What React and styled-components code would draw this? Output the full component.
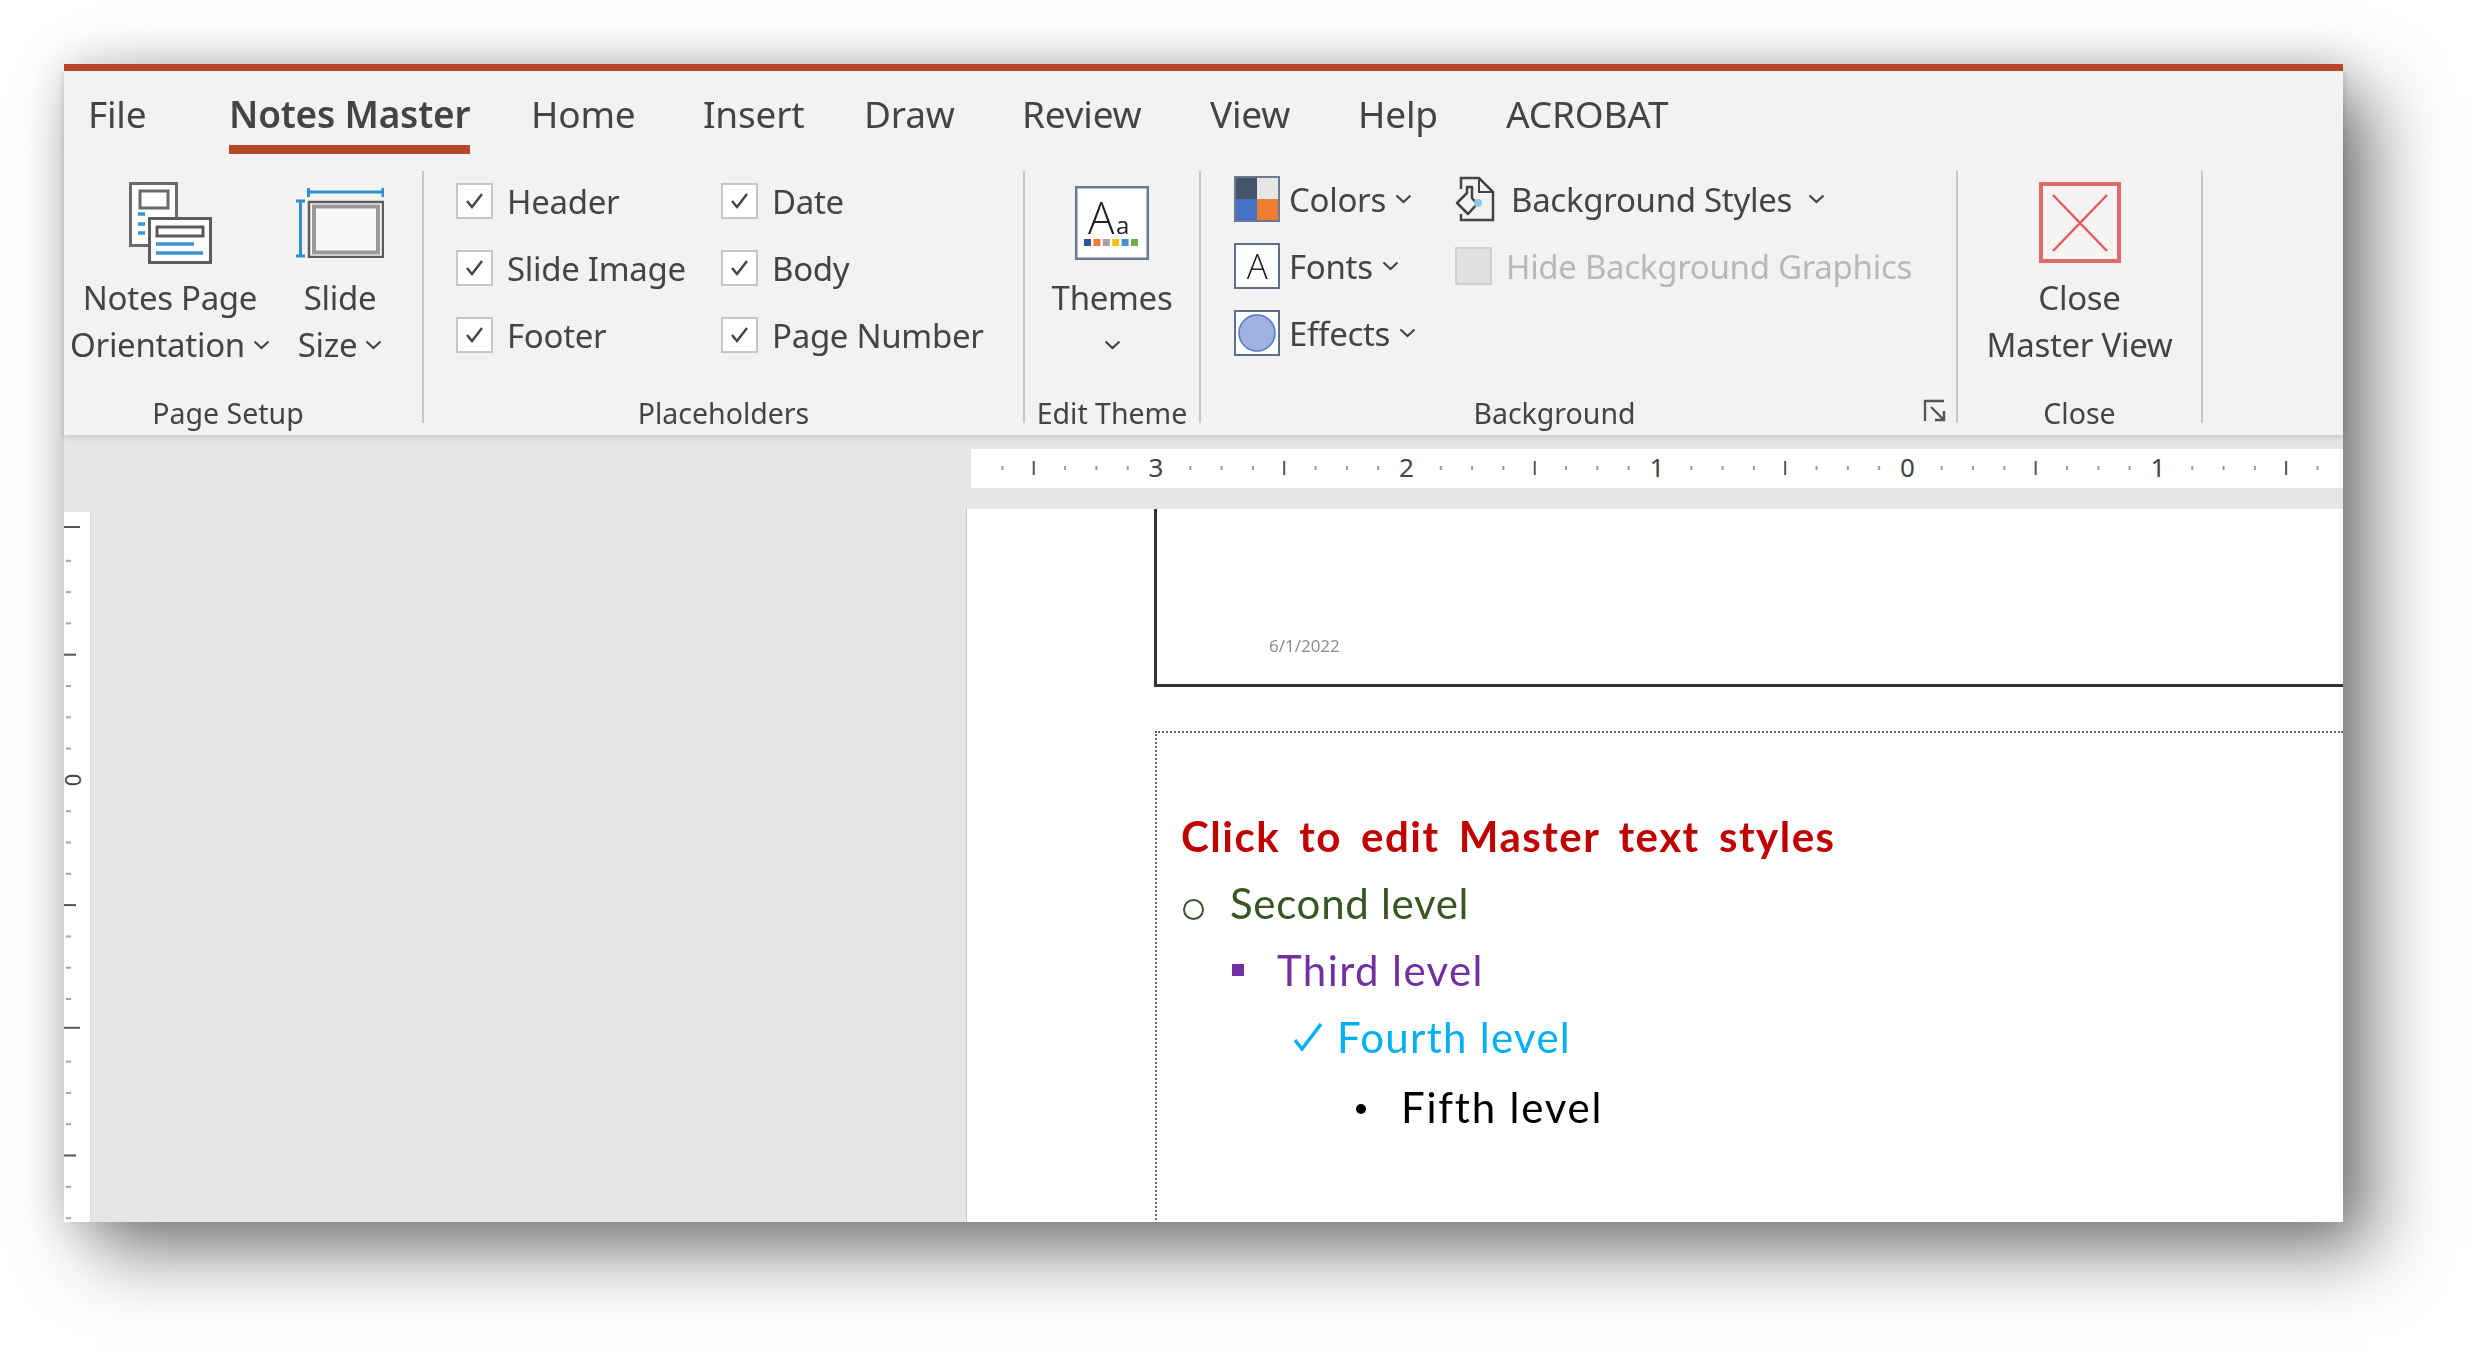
import React from "react";
import styled, { createGlobalStyle } from "styled-components";

const GlobalStyle = createGlobalStyle`
  html, body { margin: 0; padding: 0; background: #fff; }
  body { font-family: "Noto Sans", "Open Sans", sans-serif; overflow: hidden; }
`;

const Stage = styled.div`
  width: 2472px;
  height: 1351px;
  padding: 64px 0 0 64px;
  box-sizing: border-box;
`;
const Win = styled.div`
  width: 2279px;
  height: 1158px;
  display: flex;
  flex-direction: column;
  background: #e6e6e6;
  border-top: 7px solid #b7472a;
  box-sizing: border-box;
  box-shadow: 30px 30px 70px rgba(0, 0, 0, 0.5), 0 0 40px rgba(0, 0, 0, 0.16);
`;

/* ribbon */
const Ribbon = styled.div`
  background: #f3f2f1;
  height: 364px;
  flex: none;
  box-sizing: border-box;
  box-shadow: 0 2px 6px rgba(0, 0, 0, 0.14);
  position: relative;
  color: #444;
`;
const Soft = styled.div`
  filter: blur(0.6px);
`;
const TabRow = styled.div`
  display: flex;
  height: 83px;
  padding-left: 24px;
`;
const Tab = styled.div`
  width: ${(p) => p.$width}px;
  flex: none;
`;
const TabLabel = styled.span`
  display: inline-block;
  box-sizing: border-box;
  height: 83px;
  padding-top: 19px;
  line-height: 48px;
  font-size: 37px;
  letter-spacing: -0.2px;
  font-weight: ${(p) => (p.$active ? 600 : 400)};
  border-bottom: 9px solid ${(p) => (p.$active ? "#b7472a" : "transparent")};
`;
const Groups = styled.div`
  display: flex;
  height: 252px;
  margin-top: 17px;
`;
const Group = styled.div`
  width: ${(p) => p.$width}px;
  flex: none;
  box-sizing: border-box;
  border-right: 2px solid #c8c6c4;
  display: flex;
  flex-direction: column;
  position: relative;
`;
const GroupBody = styled.div`
  flex: 1;
  display: flex;
  min-height: 0;
  padding: ${(p) => p.$pad || "0"};
`;
const GroupLabel = styled.div`
  height: 20px;
  line-height: 20px;
  margin-bottom: 0;
  padding-right: ${(p) => p.$shift || 0}px;
  font-size: 28.5px;
  text-align: center;
  white-space: nowrap;
  flex: none;
`;
const BigButton = styled.div`
  width: ${(p) => p.$width || "100%"};
  flex: none;
  display: flex;
  flex-direction: column;
  align-items: center;
`;
const IconBox = styled.div`
  height: 103px;
  flex: none;
  display: flex;
  align-items: center;
  justify-content: center;
`;
const BigText = styled.div`
  font-size: 33px;
  line-height: 47px;
  min-height: 47px;
  letter-spacing: -0.3px;
  white-space: nowrap;
  display: flex;
  align-items: center;
  gap: 8px;
`;
const CheckGrid = styled.div`
  display: grid;
  grid-template-columns: 265px 1fr;
  grid-auto-rows: 36px;
  row-gap: 31px;
  align-content: start;
`;
const CheckRow = styled.div`
  display: flex;
  align-items: center;
  gap: 14px;
  font-size: 33px;
  letter-spacing: -0.3px;
  white-space: nowrap;
`;
const CheckBox = styled.span`
  width: 37px;
  height: 36px;
  box-sizing: border-box;
  flex: none;
  background: #fff;
  border: 2px solid #c8c6c4;
  display: flex;
  align-items: center;
  justify-content: center;
`;
const GreyBox = styled.span`
  width: 37px;
  height: 38px;
  box-sizing: border-box;
  flex: none;
  background: #e1e0df;
  border: 2px solid #d0cfce;
`;
const ThemeCols = styled.div`
  display: flex;
`;
const ThemeCol = styled.div`
  width: ${(p) => p.$width}px;
  flex: none;
  display: flex;
  flex-direction: column;
  gap: 21px;
`;
const ThemeRow = styled.div`
  display: flex;
  align-items: center;
  height: 46px;
  gap: ${(p) => p.$gap || 9}px;
  font-size: 33px;
  letter-spacing: -0.3px;
  white-space: nowrap;
  color: ${(p) => (p.$disabled ? "#b9b8b7" : "inherit")};
`;
const Launcher = styled.svg`
  position: absolute;
  right: 9px;
  bottom: 0;
  display: block;
`;

/* workspace */
const Workspace = styled.div`
  flex: 1;
  min-height: 0;
  display: flex;
  flex-direction: column;
`;
const RulerRow = styled.div`
  flex: none;
  padding: 14px 0 0 907px;
  height: 39px;
`;
const Sheet = styled.div`
  flex: 1;
  min-height: 0;
  display: flex;
  margin-top: 21px;
`;
const SideRuler = styled.div`
  width: 26px;
  flex: none;
  margin-top: 3px;
  background: #fff;
  box-shadow: 1px 0 0 #dcdcdc;
`;
const Page = styled.div`
  flex: 1;
  margin-left: 876px;
  background: #fff;
  border-left: 1px solid #c4c4c4;
  overflow: hidden;
`;
const SlideFrame = styled.div`
  height: 178px;
  margin-left: 187px;
  box-sizing: border-box;
  border-left: 3px solid #333;
  border-bottom: 3px solid #333;
  display: flex;
  align-items: flex-end;
  padding: 0 0 28px 112px;
`;
const DateText = styled.div`
  font-family: "Open Sans", sans-serif;
  font-size: 17px;
  line-height: 20px;
  color: #8a8a8a;
`;
const NotesBox = styled.div`
  margin: 44px 0 0 188px;
  height: 600px;
  box-sizing: border-box;
  border-top: 2px dotted #666;
  border-left: 2px dotted #666;
  padding: 69px 0 0 24px;
`;
const NoteLine = styled.div`
  display: flex;
  align-items: center;
  height: 67px;
  margin-top: ${(p) => p.$top || 0}px;
  margin-left: ${(p) => p.$indent}px;
  font-family: "Comic Sans MS", "Lato", sans-serif;
  font-size: 42px;
  letter-spacing: ${(p) => p.$spacing}px;
  word-spacing: ${(p) => p.$wordSpacing || 0}px;
  font-weight: ${(p) => (p.$bold ? 700 : 400)};
  color: ${(p) => p.$color};
  white-space: nowrap;
`;
const BulletSlot = styled.span`
  width: ${(p) => p.$width}px;
  flex: none;
  display: flex;
  align-items: center;
`;
const RingBullet = styled.span`
  width: 21px;
  height: 21px;
  box-sizing: border-box;
  border: 2.5px solid #375623;
  border-radius: 50%;
  margin-top: 14px;
`;
const SquareBullet = styled.span`
  width: 12px;
  height: 12px;
  background: #7030a0;
`;
const DotBullet = styled.span`
  width: 10px;
  height: 10px;
  border-radius: 50%;
  background: #000;
  margin-top: 4px;
`;

/* small svg parts */
const Chevron = ({ color = "#444" }) => (
  <svg width="17" height="10" viewBox="0 0 17 10" style={{ flex: "none" }}>
    <path d="M1.500 1.500 8.500 8l7-6.500" fill="none" stroke={color} strokeWidth="2.200" />
  </svg>
);

const Check = () => (
  <svg width="22" height="22" viewBox="0 0 22 22">
    <path d="M3 11l5 6L18 4" fill="none" stroke="#444" strokeWidth="2.400" />
  </svg>
);

const NotesPageIcon = () => (
  <svg width="83" height="82" viewBox="0 0 83 82">
    <rect x="1.500" y="1.500" width="46" height="62" fill="#fff" stroke="#6a6a6a" strokeWidth="3" />
    <rect x="11" y="9" width="28" height="17" fill="#fff" stroke="#6a6a6a" strokeWidth="3" />
    <path d="M9 32h7M9 42h7M9 51h7" stroke="#3b94d1" strokeWidth="3.500" />
    <rect x="20.500" y="36.500" width="61" height="44" fill="#fff" stroke="#5c5c5c" strokeWidth="3" />
    <rect x="28" y="45" width="46" height="9" fill="#fff" stroke="#5c5c5c" strokeWidth="3" />
    <path d="M27 62h38M27 71h47" stroke="#3b94d1" strokeWidth="3.500" />
  </svg>
);

const SlideSizeIcon = () => (
  <svg width="88" height="70" viewBox="0 0 88 70">
    <path d="M13 4h74M12.500 0v9M87 0v9" fill="none" stroke="#2f8fcf" strokeWidth="3" />
    <path d="M4.500 13v56M0 13h9M0 68h9" fill="none" stroke="#2f8fcf" strokeWidth="3" />
    <rect x="13" y="14" width="74" height="55" fill="#f8f8f8" stroke="#5c5c5c" strokeWidth="2.500" />
    <rect x="18" y="18.500" width="64" height="46" fill="#f8f8f8" stroke="#9a9a9a" strokeWidth="4" />
  </svg>
);

const ThemesIcon = () => (
  <svg width="74" height="74" viewBox="0 0 74 74">
    <rect x="1.250" y="1.250" width="71.500" height="71.500" fill="#fff" stroke="#6b7a90" strokeWidth="2.500" />
    <text x="13" y="48" fontFamily="Open Sans, sans-serif" fontWeight="300" fontSize="44" fill="#222">A</text>
    <text x="41" y="48" fontFamily="Open Sans, sans-serif" fontSize="24" fill="#222">a</text>
    {["#2f5597", "#ed7d31", "#a5a5a5", "#ffc000", "#4a90d0", "#70ad47"].map((c, i) => (
      <rect key={c} x={9 + i * 9.4} y="53" width="7" height="7" fill={c} />
    ))}
  </svg>
);

const ColorsIcon = () => (
  <svg width="46" height="46" viewBox="0 0 46 46" style={{ flex: "none" }}>
    <rect x="1" y="1" width="44" height="44" fill="#fff" stroke="#6b7a90" strokeWidth="2" />
    <rect x="2" y="2" width="21" height="21" fill="#44546a" />
    <rect x="23" y="2" width="21" height="21" fill="#e7e6e6" />
    <rect x="2" y="23" width="21" height="21" fill="#4472c4" />
    <rect x="23" y="23" width="21" height="21" fill="#ed7d31" />
  </svg>
);

const FontsIcon = () => (
  <svg width="46" height="46" viewBox="0 0 46 46" style={{ flex: "none" }}>
    <rect x="1" y="1" width="44" height="44" fill="#fff" stroke="#5f6e8c" strokeWidth="2" />
    <text x="23" y="36" textAnchor="middle" fontFamily="Open Sans, sans-serif" fontWeight="300" fontSize="35" fill="#222">A</text>
  </svg>
);

const EffectsIcon = () => (
  <svg width="46" height="46" viewBox="0 0 46 46" style={{ flex: "none" }}>
    <rect x="1" y="1" width="44" height="44" fill="#fff" stroke="#5f6e8c" strokeWidth="2" />
    <circle cx="23" cy="23" r="18" fill="#9fb2dd" stroke="#4f78c8" strokeWidth="1.500" />
  </svg>
);

const BackgroundStylesIcon = () => (
  <svg width="40" height="46" viewBox="0 0 40 46" style={{ flex: "none" }}>
    <path d="M6 13V2h18l14 14v28H6v-6" fill="none" stroke="#444" strokeWidth="2.500" />
    <path d="M24 2v14h14" fill="none" stroke="#444" strokeWidth="2" />
    <path d="M2 27 12 17V11h5v11l5 6-9 10z" fill="#f3f2f1" stroke="#444" strokeWidth="2.500" strokeLinejoin="round" />
    <circle cx="23" cy="27" r="4" fill="#8cc6ec" />
  </svg>
);

const CloseIcon = () => (
  <svg width="82" height="83" viewBox="0 0 82 83">
    <rect x="2" y="3" width="78" height="77" fill="#f6f4f3" stroke="#e06a6a" strokeWidth="4" />
    <path d="M14 14l54 56M68 14 14 70" fill="none" stroke="#e25a5a" strokeWidth="2.500" />
  </svg>
);

const LauncherIcon = () => (
  <Launcher width="24" height="24" viewBox="0 0 24 24">
    <path d="M21 2H2v20M8 8l13 13M21 12v9h-9" fill="none" stroke="#555" strokeWidth="2.400" />
  </Launcher>
);

const TopRuler = () => {
  const labels = { 0: "3", 8: "2", 16: "1", 24: "0", 32: "1" };
  const marks = [];
  for (let i = -5; i <= 37; i++) marks.push(i);
  return (
    <svg width="1372" height="39" viewBox="0 0 1372 39" style={{ display: "block", background: "#fff" }}>
      {marks.map((i) => {
        const x = 185 + i * 31.31;
        if (labels[i]) {
          return (
            <text key={i} x={x} y="28" textAnchor="middle" fontFamily="Noto Sans, sans-serif" fontSize="26" fill="#444">
              {labels[i]}
            </text>
          );
        }
        if (i % 4 === 0) return <rect key={i} x={x + 2} y="12" width="2" height="14" fill="#555" />;
        return <rect key={i} x={x + 2} y="17" width="2" height="4" fill="#9a9a9a" />;
      })}
    </svg>
  );
};

const LeftRuler = () => {
  const marks = [];
  for (let i = 0; i <= 22; i++) marks.push(i);
  return (
    <svg width="26" height="710" viewBox="0 0 26 710" style={{ display: "block", overflow: "visible" }}>
      {marks.map((i) => {
        const y = 15 + i * 31.3 + (i % 16 === 0 ? 0 : 2.5);
        if (i === 8) {
          return (
            <text key={i} x="17" y={y} transform={`rotate(-90 17 ${y})`} textAnchor="middle" fontFamily="Noto Sans, sans-serif" fontSize="22" fill="#444">
              0
            </text>
          );
        }
        if (i % 8 === 0) return <rect key={i} x="0" y={y - 1} width="16" height="2" fill="#555" />;
        if (i % 4 === 0) return <rect key={i} x="0" y={y - 1} width="12" height="2" fill="#555" />;
        return <rect key={i} x="2" y={y - 1} width="5" height="2" fill="#a5a5a5" />;
      })}
    </svg>
  );
};

const tabs = [
  ["File", 141],
  ["Notes Master", 302, true],
  ["Home", 172],
  ["Insert", 161],
  ["Draw", 158],
  ["Review", 188],
  ["View", 148],
  ["Help", 148],
  ["ACROBAT", 200],
];

const placeholders = ["Header", "Date", "Slide Image", "Body", "Footer", "Page Number"];

const notes = [
  { indent: 0, bullet: null, text: "Click to edit Master text styles", color: "#c00000", bold: true, spacing: 1.5, wordSpacing: 7.5 },
  { indent: 2, bullet: <RingBullet />, slot: 47, text: "Second level", color: "#375623", spacing: 0.7 },
  { indent: 51, bullet: <SquareBullet />, slot: 45, text: "Third level", color: "#7030a0", spacing: 1.4 },
  { indent: 112, bullet: <svg width="30" height="28" viewBox="0 0 30 28"><path d="M2 17l7 9L28 1" fill="none" stroke="#00b0f0" strokeWidth="3.500" /></svg>, slot: 44, text: "Fourth level", color: "#00b0f0", spacing: 1.3 },
  { indent: 175, bullet: <DotBullet />, slot: 45, text: "Fifth level", color: "#000", spacing: 1.8, top: 3 },
];

export default function App() {
  return (
    <Stage>
      <GlobalStyle />
      <Win>
        <Ribbon>
          <Soft>
            <TabRow>
              {tabs.map(([name, width, active]) => (
                <Tab key={name} $width={width}>
                  <TabLabel $active={active}>{name}</TabLabel>
                </Tab>
              ))}
            </TabRow>
            <Groups>
              <Group $width={360}>
                <GroupBody>
                  <BigButton $width="212px">
                    <IconBox><NotesPageIcon /></IconBox>
                    <BigText>Notes Page</BigText>
                    <BigText>Orientation <Chevron /></BigText>
                  </BigButton>
                  <BigButton $width="128px">
                    <IconBox><SlideSizeIcon /></IconBox>
                    <BigText>Slide</BigText>
                    <BigText>Size <Chevron /></BigText>
                  </BigButton>
                </GroupBody>
                <GroupLabel $shift={30}>Page Setup</GroupLabel>
              </Group>
              <Group $width={601}>
                <GroupBody $pad="12px 0 0 32px">
                  <CheckGrid>
                    {placeholders.map((name) => (
                      <CheckRow key={name}>
                        <CheckBox><Check /></CheckBox>
                        {name}
                      </CheckRow>
                    ))}
                  </CheckGrid>
                </GroupBody>
                <GroupLabel>Placeholders</GroupLabel>
              </Group>
              <Group $width={176}>
                <GroupBody>
                  <BigButton>
                    <IconBox><ThemesIcon /></IconBox>
                    <BigText>Themes</BigText>
                    <BigText><Chevron /></BigText>
                  </BigButton>
                </GroupBody>
                <GroupLabel>Edit Theme</GroupLabel>
              </Group>
              <Group $width={757}>
                <GroupBody $pad="5px 0 0 33px">
                  <ThemeCols>
                    <ThemeCol $width={221}>
                      <ThemeRow><ColorsIcon />Colors <Chevron /></ThemeRow>
                      <ThemeRow><FontsIcon />Fonts <Chevron /></ThemeRow>
                      <ThemeRow><EffectsIcon />Effects <Chevron /></ThemeRow>
                    </ThemeCol>
                    <ThemeCol $width={480}>
                      <ThemeRow $gap={16}><BackgroundStylesIcon />Background Styles <Chevron /></ThemeRow>
                      <ThemeRow $gap={14} $disabled><GreyBox />Hide Background Graphics</ThemeRow>
                    </ThemeCol>
                  </ThemeCols>
                </GroupBody>
                <GroupLabel $shift={48}>Background</GroupLabel>
                <LauncherIcon />
              </Group>
              <Group $width={245}>
                <GroupBody>
                  <BigButton>
                    <IconBox><CloseIcon /></IconBox>
                    <BigText>Close</BigText>
                    <BigText>Master View</BigText>
                  </BigButton>
                </GroupBody>
                <GroupLabel>Close</GroupLabel>
              </Group>
            </Groups>
          </Soft>
        </Ribbon>
        <Workspace>
          <RulerRow><TopRuler /></RulerRow>
          <Sheet>
            <SideRuler><LeftRuler /></SideRuler>
            <Page>
              <Soft>
                <SlideFrame>
                  <DateText>6/1/2022</DateText>
                </SlideFrame>
                <NotesBox>
                  {notes.map((n) => (
                    <NoteLine key={n.text} $indent={n.indent} $top={n.top} $color={n.color} $bold={n.bold} $spacing={n.spacing} $wordSpacing={n.wordSpacing}>
                      {n.bullet && <BulletSlot $width={n.slot}>{n.bullet}</BulletSlot>}
                      {n.text}
                    </NoteLine>
                  ))}
                </NotesBox>
              </Soft>
            </Page>
          </Sheet>
        </Workspace>
      </Win>
    </Stage>
  );
}
